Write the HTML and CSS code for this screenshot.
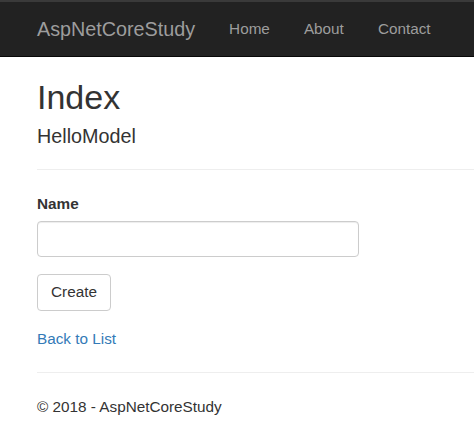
FILE: index.html
```html
<!DOCTYPE html>
<html lang="en">
<head>
<meta charset="utf-8">
<title>Index - AspNetCoreStudy</title>
<link rel="stylesheet" href="styles.css">
</head>
<body>
<nav class="navbar">
  <a class="brand" href="#">AspNetCoreStudy</a>
  <ul class="nav">
    <li><a href="#">Home</a></li>
    <li><a href="#">About</a></li>
    <li><a href="#">Contact</a></li>
  </ul>
</nav>
<div class="container">
  <h1 class="title">Index</h1>
  <h4 class="subtitle">HelloModel</h4>
  <hr class="rule rule-top">
  <form class="form">
    <label class="label" for="name">Name</label>
    <input class="input" id="name" type="text">
    <button class="btn" type="button">Create</button>
  </form>
  <a class="back" href="#">Back to List</a>
  <hr class="rule rule-bottom">
  <footer class="footer">© 2018 - AspNetCoreStudy</footer>
</div>
</body>
</html>
```
FILE: styles.css
```css
* { box-sizing: border-box; }
html, body { margin: 0; padding: 0; }
body {
  font-family: "Liberation Sans", Arial, Helvetica, sans-serif;
  font-size: 15.3px;
  line-height: 1.42857;
  color: #333;
  background: #fff;
}
.navbar {
  display: flex;
  align-items: center;
  height: 57px;
  background: #222;
  border-top: 2px solid #3a3a3a;
  border-bottom: 1px solid #080808;
  padding-left: 37px;
}
.brand {
  font-size: 19.75px;
  color: #9d9d9d;
  text-decoration: none;
}
.nav {
  display: flex;
  list-style: none;
  margin: 0;
  padding: 0 0 0 17px;
}
.nav a {
  display: block;
  padding: 0 17px;
  color: #9d9d9d;
  text-decoration: none;
}
.container {
  padding-left: 37px;
}
.title {
  font-size: 34px;
  font-weight: 500;
  line-height: 1.1;
  margin: 21.5px 0 0;
}
.subtitle {
  font-size: 19.75px;
  font-weight: 500;
  line-height: 1.1;
  margin: 9.7px 0 0;
}
.rule {
  border: 0;
  border-top: 1px solid #eee;
  margin: 0;
}
.rule-top { margin-top: 22px; }
.form {
  display: flex;
  flex-direction: column;
  align-items: flex-start;
  padding-top: 22.8px;
}
.label {
  font-weight: bold;
  margin-bottom: 5.7px;
}
.input {
  width: 322px;
  height: 36px;
  border: 1px solid #ccc;
  border-radius: 4px;
  box-shadow: inset 0 1px 1px rgba(0,0,0,.075);
  font: inherit;
  padding: 6px 12px;
}
.btn {
  margin-top: 17px;
  width: 74px;
  height: 37px;
  border: 1px solid #ccc;
  border-radius: 4px;
  background: #fff;
  color: #333;
  font: inherit;
  padding: 0;
}
.back {
  display: inline-block;
  margin-top: 17.1px;
  color: #337ab7;
  text-decoration: none;
}
.rule-bottom { margin-top: 22.7px; }
.footer {
  padding-top: 22.8px;
}
```
